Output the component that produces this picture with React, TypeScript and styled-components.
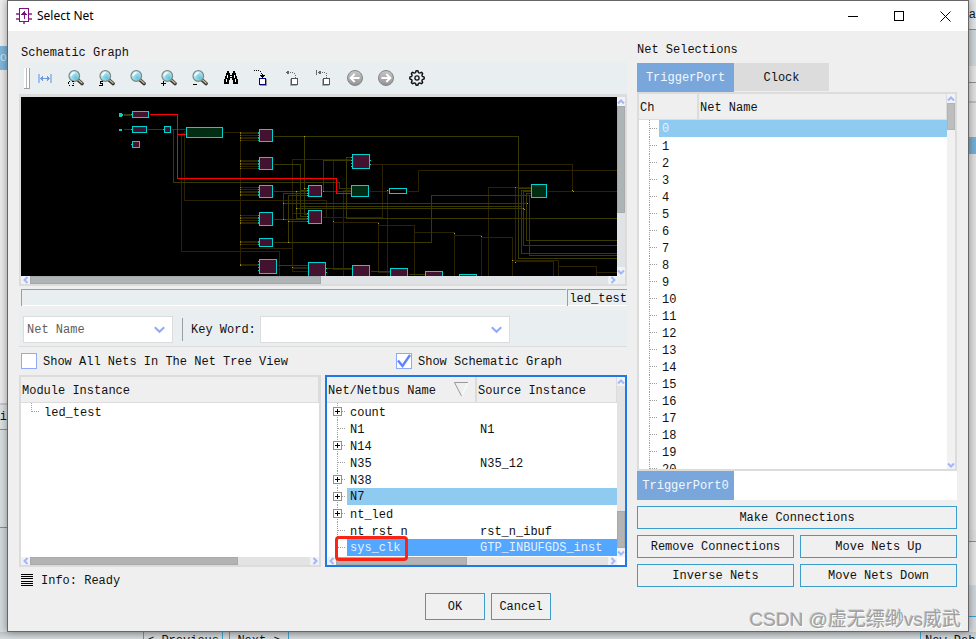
import React from "react";
import styled, { createGlobalStyle, css } from "styled-components";

const MONO = '"Liberation Mono", "Courier New", monospace';
const SANS = '"Noto Sans", "Open Sans", sans-serif';
const FACE = "#efefef";
const PALE = "#e9eef1";
const EDGE = "#dcdcdc";
const ARROW = "#a3b6fa";

const Global = createGlobalStyle`
  * { box-sizing: border-box; }
  body { margin: 0; font: 12px/17px ${MONO}; color: #111; background: #d3d9dc; }
  button, input, select { font: inherit; color: inherit; margin: 0; }
  svg { display: block; }
`;

/* ---------- desktop behind the dialog ---------- */

const Desktop = styled.div`
  position: relative;
  display: grid;
  grid-template-columns: 7px minmax(0, 1fr) 7px;
  grid-template-rows: 1fr 7px;
  min-height: 100vh;
  overflow: hidden;
`;

const Strip = styled.div`
  display: flex;
  flex-direction: column;
  overflow: hidden;
`;

const Slab = styled.div<{ $h: number; $bg: string; $line?: boolean; $ink?: string }>`
  flex: none;
  height: ${(p) => p.$h}px;
  background: ${(p) => p.$bg};
  color: ${(p) => p.$ink || "inherit"};
  border-bottom: ${(p) => (p.$line ? "1px solid #8c8c8c" : "0")};
  display: flex;
  align-items: center;
  justify-content: flex-end;
  white-space: nowrap;
  line-height: 20px;
`;

const RestSlab = styled.div`
  flex: 1;
  background: #d3d9dc;
`;

const Under = styled.div`
  grid-column: 1 / -1;
  display: grid;
  grid-template-columns: 80px 60px 1fr 56px;
  column-gap: 6px;
  padding-left: 143px;
  align-items: end;
  overflow: hidden;
  background: linear-gradient(#bfc3c6, #d5dadd);
`;

const UnderButton = styled.button`
  height: 18px;
  padding: 0;
  border: solid #3c9dcc;
  border-width: 0 1px;
  background: none;
  white-space: nowrap;
  overflow: hidden;
  line-height: 12px;
  &:last-child { grid-column: 4; border-right: 0; text-align: left; padding-left: 4px; }
`;

/* ---------- dialog frame ---------- */

const Dialog = styled.main`
  display: flex;
  flex-direction: column;
  background: ${FACE};
  border: 1px solid #666;
  box-shadow: 0 0 8px rgba(0, 0, 0, 0.4);
  z-index: 1;
`;

const TitleBar = styled.header`
  display: flex;
  align-items: center;
  height: 30px;
  padding-left: 8px;
  background: #fff;
`;

const Title = styled.h1`
  flex: 1;
  margin: 0 0 0 5px;
  font: 12px/18px ${SANS};
  color: #000;
`;

const WindowButton = styled.button`
  display: grid;
  place-items: center;
  width: 46px;
  height: 30px;
  padding: 0;
  border: 0;
  background: none;
`;

const Columns = styled.div`
  flex: 1;
  display: grid;
  grid-template-columns: minmax(0, 608fr) minmax(0, 320fr);
  column-gap: 10px;
  padding: 0 11px;
`;

const LeftColumn = styled.section`
  display: flex;
  flex-direction: column;
`;

const RightColumn = styled.section`
  display: flex;
  flex-direction: column;
  padding-bottom: 6px;
`;

const Caption = styled.h2<{ $lead?: boolean }>`
  height: ${(p) => (p.$lead ? 31 : 32)}px;
  margin: 0;
  padding: ${(p) => (p.$lead ? "14px 0 0 2px" : "11px 0 0")};
  font: 12px/17px ${MONO};
`;

const Footer = styled.footer`
  display: flex;
  justify-content: center;
  gap: 6px;
  padding-bottom: 11px;
`;

const PushButton = styled.button<{ $tall?: boolean }>`
  min-width: ${(p) => (p.$tall ? 60 : 0)}px;
  height: ${(p) => (p.$tall ? 27 : 23)}px;
  padding: 2px 0 0;
  border: 1px solid #3c9dcc;
  background: #f0f0f0;
`;

/* ---------- toolbar ---------- */

const ToolBar = styled.div`
  display: flex;
  align-items: center;
  gap: 15px;
  height: 32px;
  padding-left: 5px;
  background: ${PALE};
`;

const Grip = styled.div`
  width: 6px;
  height: 21px;
  margin-right: -8px;
  background: #fff;
  border: solid #a0a0a0;
  border-width: 0 1px 1px 0;
  box-shadow: inset -2px 0 0 #fff, inset -3px 0 0 #b8b8b8;
`;

const Tool = styled.button`
  width: 16px;
  height: 16px;
  padding: 0;
  border: 0;
  background: none;
`;

/* ---------- scroll bars ---------- */

type BarProps = { $vertical?: boolean; $parts: [number, number, number]; $track: string };

const Bar = styled.div<BarProps>`
  display: grid;
  ${(p) => {
    const t = `9px ${p.$parts[0]}fr ${p.$parts[1]}fr ${p.$parts[2]}fr 9px`;
    return p.$vertical
      ? css`grid-template-rows: ${t}; width: 8px;`
      : css`grid-template-columns: ${t}; height: 8px;`;
  }}
  background: ${(p) => p.$track};
`;

const BarArrow = styled.button`
  display: grid;
  place-items: center;
  min-width: 0;
  padding: 0;
  border: 0;
  background: #f0f2f6;
`;

const Thumb = styled.div<{ $c: string }>`
  background: ${(p) => p.$c};
  box-shadow: inset 0 0 0 1px rgba(0, 0, 0, 0.05);
`;

const ARROWS = { up: "M1 5.5L4 2.5L7 5.5", down: "M1 2.5L4 5.5L7 2.5", left: "M5.5 1L2.5 4L5.5 7", right: "M2.5 1L5.5 4L2.5 7" };

function ArrowGlyph({ dir }: { dir: keyof typeof ARROWS }) {
  return (
    <svg width="8" height="8" viewBox="0 0 8 8" fill="none" stroke={ARROW} strokeWidth="2">
      <path d={ARROWS[dir]} />
    </svg>
  );
}

function ScrollBar({ vertical, parts, track = "#e3e3e3", thumb = "#b3b3b3" }: {
  vertical?: boolean; parts: [number, number, number]; track?: string; thumb?: string;
}) {
  return (
    <Bar $vertical={vertical} $parts={parts} $track={track}>
      <BarArrow aria-label={vertical ? "Scroll up" : "Scroll left"}><ArrowGlyph dir={vertical ? "up" : "left"} /></BarArrow>
      <span />
      <Thumb $c={thumb} />
      <span />
      <BarArrow aria-label={vertical ? "Scroll down" : "Scroll right"}><ArrowGlyph dir={vertical ? "down" : "right"} /></BarArrow>
    </Bar>
  );
}

/* ---------- schematic ---------- */

const GraphFrame = styled.div`
  display: grid;
  grid-template-columns: minmax(0, 1fr) 8px;
  grid-template-rows: 179px 8px;
  border: 2px solid ${EDGE};
  border-top-width: 3px;
  background: ${PALE};
`;

const Canvas = styled.svg`
  width: 100%;
  height: 100%;
  background: #000;
`;

const StatusLine = styled.div`
  display: grid;
  grid-template-columns: minmax(0, 1fr) auto;
  gap: 1px;
  margin: 3px 0 5px 2px;
  background: ${PALE};
`;

const StatusCell = styled.div`
  height: 17px;
  padding-left: 1px;
  border: solid #9a9fa1;
  border-width: 1px 0 0 1px;
  box-shadow: inset 0 -1px 0 #fff;
  line-height: 18px;
`;

const modules: [number, number, number, number, string?][] = [
  [132, 111, 17, 7], [132, 126, 15, 7], [132, 141, 8, 7], [164, 126, 7, 7],
  [186, 127, 37, 11, "g"], [259, 129, 14, 13], [259, 157, 14, 13], [259, 185, 14, 13],
  [259, 212, 14, 14], [259, 238, 14, 9], [259, 259, 18, 15], [308, 185, 14, 12],
  [308, 210, 14, 14], [308, 262, 18, 18], [352, 154, 18, 15], [351, 185, 18, 12, "g"],
  [389, 188, 18, 6, "k"], [531, 184, 16, 14, "g"], [352, 265, 18, 15], [390, 268, 18, 15],
  [425, 271, 18, 15], [459, 274, 18, 15],
];

const brightWires =
  "M273 136H518V188H531M518 188V258H617M304 136V214H308M304 188H308M273 164H300V216H308M300 190H308" +
  "M273 191H308M296 191V218H308M296 208H523M273 219H308M283 219V193H308M283 203H527M273 242H431V195H531" +
  "M288 242V195H308M288 221H308M300 206H521M531 190H521V253H617M531 191H523V245H617M531 193H526V240H617" +
  "M531 195H529V255H617M123 129H132M147 129H164M171 129H186M173 129V182H339V188H351M123 114H132M123 115H132" +
  "M322 191H351M323 191V160H352M352 157H346V218H617M277 265H308M326 268H352M370 271H390M408 274H425";

const dimWires =
  "M186 133H181V251H279V276M186 131H184V200H326V217M322 217H382V164M370 164H572V190M223 132H240V265H259" +
  "M352 159H292V271H308M292 213H308M240 248H292M292 267H308M292 268H308M333 159V269H352M333 222H378V272H390" +
  "M378 225H414V276M414 232H454V276M454 235H481V276M481 237H512V276M351 190H343V276M389 190H387V276" +
  "M369 191H389M407 191H418V170H617M531 187H488V276M515 187V261H553V276M512 260H558V266H596V272H617" +
  "M558 266V276M596 272V276M547 191H617M277 269H279";

const combs = [132, 133, 135, 137, 138, 140, 160, 161, 163, 164, 166, 168, 187, 189, 191, 192, 194, 195, 215, 217, 218, 220, 222, 223, 241, 242, 244, 264];
const junctions: [number, number][] = [
  [304, 136], [296, 191], [296, 208], [283, 203], [283, 219], [288, 221], [288, 242], [323, 191],
  [527, 203], [523, 208], [524, 209], [572, 190], [573, 191], [515, 187], [378, 223], [454, 233],
  [481, 236], [512, 260], [515, 262], [333, 221], [292, 267], [304, 188], [387, 190], [240, 265],
];

function Schematic() {
  const fill = (k?: string) => (k === "g" ? "#032d13" : k === "k" ? "#000" : "#43122f");
  return (
    <Canvas viewBox="21 97 596 179" preserveAspectRatio="xMinYMin slice" shapeRendering="crispEdges" role="img" aria-label="Schematic of led_test">
      <g transform="translate(.5 .5)" fill="none">
        <path d={dimWires} stroke="#2c2200" />
        <path d={combs.map((y) => `M240 ${y}H259`).join("")} stroke="#2c2200" />
        <path d={brightWires} stroke="#3a3a00" />
        <path d="M149 114H177V178H336V193H351M177 134H186" stroke="#f00" />
      </g>
      {combs.map((y) => (
        <React.Fragment key={y}>
          <rect x="240" y={y} width="1" height="1" fill="#8a7a00" />
          <rect x="258" y={y} width="1" height="1" fill="#00b8a8" />
        </React.Fragment>
      ))}
      {junctions.map(([x, y]) => <rect key={`${x},${y}`} x={x} y={y} width="1" height="1" fill="#b0a800" />)}
      {modules.map(([x, y, w, h, k]) => (
        <rect key={`${x},${y}`} x={x + 0.5} y={y + 0.5} width={w - 1} height={h - 1} fill={fill(k)} stroke="#00d2d2" />
      ))}
      <path d="M119 113h3v1h1v2h-1v1h-3zM119 129h3v2h-3zM131 114h1v1h-1zM131 129h1v1h-1zM131 144h1v1h-1zM163 129h1v1h-1zM307 188h1v1h-1zM307 190h1v1h-1zM307 193h1v1h-1zM307 195h1v1h-1zM307 213h1v1h-1zM307 216h1v1h-1zM307 218h1v1h-1zM307 221h1v1h-1zM351 157h1v1h-1zM351 160h1v1h-1zM351 163h1v1h-1zM351 166h1v1h-1zM258 261h1v1h-1zM258 267h1v1h-1zM258 270h1v1h-1zM370 160h1v1h-1zM370 164h1v1h-1zM326 268h1v1h-1zM326 272h1v1h-1z" fill="#00d2c0" />
    </Canvas>
  );
}

/* ---------- filter and options ---------- */

const FilterBar = styled.div`
  display: flex;
  align-items: center;
  height: 36px;
  padding: 2px 4px 0;
  background: ${PALE};
  border-bottom: 1px solid ${EDGE};
`;

const Divider = styled.div`
  width: 1px;
  height: 23px;
  margin: 0 8px 0 9px;
  background: #9a9fa1;
`;

const ComboBox = styled.div<{ $w: number }>`
  display: grid;
  align-items: center;
  width: ${(p) => p.$w}px;
  & > * { grid-area: 1 / 1; }
  & > svg { justify-self: end; margin-right: 8px; pointer-events: none; }
`;

const Select = styled.select`
  width: 100%;
  height: 27px;
  padding: 2px 3px 0;
  appearance: none;
  border: 1px solid ${EDGE};
  border-radius: 0;
  background: #fff;
  color: #606060;
`;

const KeyLabel = styled.label`
  width: 69px;
  padding-top: 2px;
`;

const Chevron = () => (
  <svg width="11" height="8" viewBox="0 0 11 8" fill="none" stroke="#91a9f9" strokeWidth="2">
    <path d="M.8 1.2L5.5 5.8L10.2 1.2" />
  </svg>
);

const Options = styled.div`
  display: grid;
  grid-template-columns: 375fr 231fr;
  align-items: center;
  height: 28px;
  padding-left: 2px;
`;

const Option = styled.label`
  display: flex;
  align-items: center;
  gap: 6px;
  white-space: nowrap;
  line-height: 20px;
`;

const OptionText = styled.span`
  padding-top: 2px;
`;

const Check = styled.input`
  appearance: none;
  width: 16px;
  height: 16px;
  border: 1px solid #8ea8fa;
  background: #fff;
`;

const CheckBox = styled.span`
  display: grid;
  & > * { grid-area: 1 / 1; }
  & > svg { pointer-events: none; }
`;

/* ---------- trees ---------- */

const Panels = styled.div`
  flex: 1;
  display: grid;
  grid-template-columns: 1fr 1fr;
  gap: 4px;
`;

const Panel = styled.div<{ $active?: boolean }>`
  position: relative;
  display: grid;
  grid-template-columns: minmax(0, 1fr) auto;
  grid-template-rows: minmax(180px, 1fr) auto;
  border: 2px solid ${(p) => (p.$active ? "#1e78e6" : EDGE)};
  background: #fff;
`;

const NetPanel = styled(Panel)`
  flex: 1;
  grid-template-rows: minmax(0, 1fr);
`;

const Clip = styled.div`
  overflow: hidden;
  height: 0;
  min-height: 100%;
`;

const Table = styled.table`
  align-self: start;
  width: 100%;
  table-layout: fixed;
  border-collapse: separate;
  border-spacing: 0;
  td { padding: 0; height: 17px; }
`;

const Head = styled.th<{ $w?: number }>`
  width: ${(p) => (p.$w ? `${p.$w}px` : "auto")};
  height: 26px;
  padding: 3px 0 0 1px;
  background: ${FACE};
  border: solid ${EDGE};
  border-width: 0 ${(p) => (p.$w ? 2 : 1)}px 1px 0;
  font-weight: normal;
  text-align: left;
  line-height: 18px;
`;

const HeadLine = styled.div`
  display: flex;
  justify-content: space-between;
  padding-right: 6px;
`;

type Tone = "none" | "light" | "strong";
const toneBg = { none: "transparent", light: "#8fcaf0", strong: "#54a7ff" };

const Node = styled.div`
  display: grid;
  grid-template-columns: 20px minmax(0, 1fr);
  height: 17px;
`;

const NodeText = styled.span<{ $tone: Tone; $pale?: boolean }>`
  display: block;
  height: 17px;
  padding-left: 3px;
  line-height: ${(p) => (p.$tone === "none" ? 20 : 18)}px;
  white-space: nowrap;
  background: ${(p) => toneBg[p.$tone]};
  color: ${(p) => (p.$pale ? "#e4f1ff" : "inherit")};
`;

function Branch({ plus, last }: { plus?: boolean; last?: boolean }) {
  return (
    <svg width="20" height="17" viewBox="0 0 20 17" shapeRendering="crispEdges" fill="none">
      <path d={`M10.5 0V${last ? 9 : 17}M11 8.5H19`} stroke="#a0a0a0" strokeDasharray="1 1" />
      {plus && (
        <>
          <rect x="6.5" y="4.5" width="8" height="8" fill="#fff" stroke="#909090" />
          <path d="M8 8.5H13M10.5 6V11" stroke="#000" />
        </>
      )}
    </svg>
  );
}

function TreeCell({ text, plus, last, tone = "none", pale }: { text: string; plus?: boolean; last?: boolean; tone?: Tone; pale?: boolean }) {
  return (
    <Node>
      <Branch plus={plus} last={last} />
      <NodeText $tone={tone} $pale={pale}>{text}</NodeText>
    </Node>
  );
}

const Marker = styled.div`
  position: absolute;
  left: 8px;
  bottom: 4px;
  width: 73px;
  height: 25px;
  border: 3px solid #fb2414;
  border-radius: 4px;
  pointer-events: none;
`;

const Info = styled.div`
  display: flex;
  align-items: center;
  gap: 8px;
  height: 26px;
  padding-left: 2px;
  line-height: 20px;
`;

const InfoText = styled.span`
  padding-top: 2px;
`;

const nets: { name: string; source?: string; plus?: boolean; tone?: Tone }[] = [
  { name: "count", plus: true },
  { name: "N1", source: "N1" },
  { name: "N14", plus: true },
  { name: "N35", source: "N35_12" },
  { name: "N38", plus: true },
  { name: "N7", plus: true, tone: "light" },
  { name: "nt_led", plus: true },
  { name: "nt_rst_n", source: "rst_n_ibuf" },
  { name: "sys_clk", source: "GTP_INBUFGDS_inst", tone: "strong" },
];

/* ---------- right column ---------- */

const Tabs = styled.div<{ $bg?: string }>`
  display: flex;
  align-items: flex-start;
  height: 29px;
  background: ${(p) => p.$bg || "none"};
`;

const Tab = styled.button<{ $on?: boolean }>`
  width: ${(p) => (p.$on ? 97 : 95)}px;
  height: ${(p) => (p.$on ? 29 : 28)}px;
  padding: 2px 0 0;
  border: 0;
  background: ${(p) => (p.$on ? "#79a7dc" : EDGE)};
  color: ${(p) => (p.$on ? "#f2f7ff" : "#111")};
`;

const Actions = styled.div`
  display: grid;
  grid-template-columns: 1fr 1fr;
  gap: 6px;
  margin-top: 6px;
  & > :first-child { grid-column: 1 / -1; }
`;

const Watermark = styled.div`
  position: absolute;
  right: 15px;
  bottom: 6px;
  z-index: 2;
  font: 19px/26px "Liberation Sans", "Noto Sans CJK SC", sans-serif;
  color: #a0a0a0;
  text-shadow: 1px 1px 0 #fff, -1px -1px 0 rgba(110, 110, 110, 0.35);
  white-space: nowrap;
  pointer-events: none;
`;

/* ---------- icons ---------- */

function Icon({ children, crisp }: { children: React.ReactNode; crisp?: boolean }) {
  return (
    <svg width="16" height="16" viewBox="0 0 16 16" fill="none" shapeRendering={crisp ? "crispEdges" : "auto"}>
      {children}
    </svg>
  );
}

function Lens({ mark }: { mark?: string }) {
  return (
    <Icon>
      <path d="M9.5 9.5L14 13.5" stroke="#333" strokeWidth="3.6" strokeLinecap="round" />
      <path d="M10 9.5L14 13" stroke="#c4b890" strokeWidth="1.5" strokeLinecap="round" />
      <circle cx="6.3" cy="6" r="5.3" fill="url(#lens)" stroke="#7b8788" strokeWidth="1.2" />
      <path d="M3.4 6A3.2 3.2 0 0 1 6.6 2.8" stroke="#fff" strokeWidth="1.4" />
      {mark && <path d={mark} stroke="#000" shapeRendering="crispEdges" />}
    </Icon>
  );
}

function RoundArrow({ flip }: { flip?: boolean }) {
  return (
    <Icon>
      <circle cx="8" cy="8" r="7.5" fill="url(#disc)" stroke="#858585" />
      <path d={flip ? "M3.5 8H12M8.3 4L12.3 8L8.3 12" : "M12.5 8H4M7.7 4L3.7 8L7.7 12"} stroke="#fff" strokeWidth="2" />
    </Icon>
  );
}

const gearPath = Array.from({ length: 48 }, (_, i) => {
  const a = (i / 48) * Math.PI * 2;
  const r = 6.4 + 0.9 * Math.max(-1, Math.min(1, 1.6 * Math.cos(8 * a)));
  return `${i ? "L" : "M"}${(8 + r * Math.cos(a)).toFixed(2)} ${(8 + r * Math.sin(a)).toFixed(2)}`;
}).join("") + "Z";

const tools: [string, React.ReactNode][] = [
  ["Fit width", <Icon crisp><path d="M1 4H3V13H1zM13 4H15V13H13z" fill="#a5bdec" /><path d="M3 8H4V7H5V6H6V8H10V6H11V7H12V8H13V9H12V10H11V11H10V9H6V11H5V10H4V9H3z" fill="#6f9be0" /></Icon>],
  ["Zoom area", <Lens mark="M.5 12V13.5M.5 15.5H2M.5 11.5H2M4 11.5H5.5M5 13V14M3.5 15.5H5.5" />],
  ["Zoom selection", <Lens mark="M4 11.5H1M1.5 12V13M1 13.5H4M3.5 14V15M4 15.5H0" />],
  ["Zoom fit", <Lens />],
  ["Zoom in", <Lens mark="M0 13.5H5M2.5 11V16" />],
  ["Zoom out", <Lens mark="M1 14.5H5" />],
  ["Find", <Icon crisp><path d="M4 1H6V3H7V5H9V3H10V1H12V3H13V6H14V9H15V14H10V10H9V8H7V10H6V14H1V9H2V6H3V3H4z" fill="#000" /><path d="M4 5H5V8H4zM3 9H4V12H3zM11 5H12V8H11zM12 9H13V12H12zM7 6H9V7H7z" fill="#fff" /></Icon>],
  ["Descend", <Icon crisp><path d="M0 .5H1M2 .5H3M4 .5H5M6 1.5H7M7 3.5H8M8 4.5H9" stroke="#000" /><path d="M6 5H11V6H10V7H9V8H8V7H7V6H6z" fill="#000" /><path d="M6 9H13V16H6z" fill="#999" /><rect x="5.5" y="8.5" width="6" height="6" fill="#fff" stroke="#000080" /></Icon>],
  ["Ascend", <Icon crisp><path d="M1 2.5H2M2 1.5H4M2 3.5H4M2 2.5H4M5 2.5H6M7 2.5H8M9 3.5H10M10 5.5H11M10 7.5H11" stroke="#666" /><path d="M5 9H12V16H5z" fill="#aaa" /><rect x="6.5" y="8.5" width="6" height="6" fill="#fff" stroke="#555" /></Icon>],
  ["Ascend to top", <Icon crisp><path d="M.5 0V5M2 2.5H5M3 1.5H5M3 3.5H5M6 2.5H7M8 2.5H9M10 3.5H11M10 5.5H11M10 7.5H11" stroke="#666" /><path d="M6 9H13V16H6z" fill="#aaa" /><rect x="7.5" y="8.5" width="6" height="6" fill="#fff" stroke="#555" /></Icon>],
  ["Back", <RoundArrow />],
  ["Forward", <RoundArrow flip />],
  ["Settings", <Icon><path d={gearPath} stroke="#111" strokeWidth="1.4" /><circle cx="8" cy="8" r="2.1" stroke="#111" strokeWidth="1.3" /></Icon>],
];

const Defs = () => (
  <svg width="0" height="0" aria-hidden="true">
    <defs>
      <radialGradient id="lens" cx=".65" cy=".7" r=".75">
        <stop offset="0" stopColor="#5fc3dc" />
        <stop offset=".6" stopColor="#a5dfea" />
        <stop offset="1" stopColor="#e9fafd" />
      </radialGradient>
      <linearGradient id="disc" x1="0" y1="0" x2="0" y2="1">
        <stop offset="0" stopColor="#c8c8c8" />
        <stop offset="1" stopColor="#929292" />
      </linearGradient>
    </defs>
  </svg>
);

export default function App() {
  return (
    <>
      <Global />
      <Desktop>
        <Strip>
          <Slab $h={46} $bg="#ededed" />
          <Slab $h={24} $bg="#7fb5da" $ink="#cfe4f2">Co</Slab>
          <Slab $h={333} $bg="#ebebeb" />
          <Slab $h={2} $bg="#c4c6c8" />
          <Slab $h={25} $bg="#dde1e3" $line>ti</Slab>
          <Slab $h={98} $bg="#d9dfe1" $line />
          <RestSlab />
        </Strip>

        <Dialog role="dialog" aria-labelledby="dialog-title">
          <TitleBar>
            <svg width="16" height="16" viewBox="0 0 16 16" fill="none" shapeRendering="crispEdges">
              <path d="M0 5.5H3M0 10.5H3M13 5.5H16M13 10.5H16M8 14V16" stroke="#a65aa6" strokeWidth="2" />
              <rect x="3.5" y=".5" width="9" height="13" fill="#fff" stroke="#80107f" strokeWidth="1" />
              <path d="M8 3V11M5 6.5H11M6 5.5H10M7 4.5H9" stroke="#80107f" />
            </svg>
            <Title id="dialog-title">Select Net</Title>
            <WindowButton aria-label="Minimize"><svg width="10" height="10" stroke="#000" shapeRendering="crispEdges"><path d="M0 5.5H10" /></svg></WindowButton>
            <WindowButton aria-label="Maximize"><svg width="10" height="10" stroke="#000" fill="none" shapeRendering="crispEdges"><rect x=".5" y=".5" width="9" height="9" /></svg></WindowButton>
            <WindowButton aria-label="Close"><svg width="11" height="11" stroke="#000"><path d="M.5 .5L10.5 10.5M10.5 .5L.5 10.5" /></svg></WindowButton>
          </TitleBar>

          <Columns>
            <LeftColumn>
              <Caption $lead>Schematic Graph</Caption>
              <ToolBar role="toolbar" aria-label="Schematic tools">
                <Grip />
                {tools.map(([label, icon]) => <Tool key={label} aria-label={label}>{icon}</Tool>)}
              </ToolBar>
              <GraphFrame>
                <Schematic />
                <ScrollBar vertical parts={[0, 107, 54]} track="#dfe3e5" thumb="#aeb3b5" />
                <ScrollBar parts={[0, 291, 287]} track="#dfe3e5" thumb="#aeb3b5" />
              </GraphFrame>
              <StatusLine>
                <StatusCell />
                <StatusCell>led_test</StatusCell>
              </StatusLine>
              <FilterBar>
                <ComboBox $w={150}>
                  <Select aria-label="Search field"><option>Net Name</option></Select>
                  <Chevron />
                </ComboBox>
                <Divider />
                <KeyLabel htmlFor="key-word">Key Word:</KeyLabel>
                <ComboBox $w={250}>
                  <Select id="key-word"><option></option></Select>
                  <Chevron />
                </ComboBox>
              </FilterBar>
              <Options>
                <Option>
                  <CheckBox><Check type="checkbox" /></CheckBox>
                  <OptionText>Show All Nets In The Net Tree View</OptionText>
                </Option>
                <Option>
                  <CheckBox>
                    <Check type="checkbox" defaultChecked />
                    <svg width="16" height="16" viewBox="0 0 16 16" fill="none" stroke="#5f86f8" strokeWidth="2.4"><path d="M2 7.5L6.5 13L14 2" /></svg>
                  </CheckBox>
                  <OptionText>Show Schematic Graph</OptionText>
                </Option>
              </Options>
              <Panels>
                <Panel>
                  <Table>
                    <thead><tr><Head>Module Instance</Head></tr></thead>
                    <tbody><tr><td><TreeCell text="led_test" last /></td></tr></tbody>
                  </Table>
                  <span />
                  <ScrollBar parts={[0, 208, 72]} />
                </Panel>
                <Panel $active>
                  <Table>
                    <thead>
                      <tr>
                        <Head $w={150}>
                          <HeadLine>
                            Net/Netbus Name
                            <svg width="15" height="15" viewBox="0 0 15 15" fill="none"><path d="M14 .5L7.5 14" stroke="#fff" /><path d="M7.5 14L.5 .5H14" stroke="#999" /></svg>
                          </HeadLine>
                        </Head>
                        <Head>Source Instance</Head>
                      </tr>
                    </thead>
                    <tbody>
                      {nets.map((n, i) => (
                        <tr key={n.name}>
                          <td><TreeCell text={n.name} plus={n.plus} tone={n.tone} pale={n.tone === "strong"} last={i === nets.length - 1} /></td>
                          <td><NodeText $tone={n.tone || "none"} $pale={n.tone === "strong"}>{n.source}</NodeText></td>
                        </tr>
                      ))}
                    </tbody>
                  </Table>
                  <ScrollBar vertical parts={[125, 37, 0]} />
                  <ScrollBar parts={[0, 131, 141]} />
                  <Marker />
                </Panel>
              </Panels>
              <Info>
                <svg width="12" height="12" viewBox="0 0 12 12" stroke="#000" shapeRendering="crispEdges"><path d="M0 .5H12M0 2.5H12M0 4.5H12M0 7.5H12M0 9.5H12M0 11.5H12" /></svg>
                <InfoText>Info: Ready</InfoText>
              </Info>
            </LeftColumn>

            <RightColumn>
              <Caption>Net Selections</Caption>
              <Tabs role="tablist">
                <Tab role="tab" aria-selected="true" $on>TriggerPort</Tab>
                <Tab role="tab" aria-selected="false">Clock</Tab>
              </Tabs>
              <NetPanel>
                <Clip>
                  <Table>
                    <thead><tr><Head $w={60}>Ch</Head><Head>Net Name</Head></tr></thead>
                    <tbody>
                      {Array.from({ length: 21 }, (_, i) => (
                        <tr key={i}>
                          <td><TreeCell text={String(i)} tone={i ? "none" : "light"} pale={!i} /></td>
                          <td><NodeText $tone={i ? "none" : "light"} /></td>
                        </tr>
                      ))}
                    </tbody>
                  </Table>
                </Clip>
                <ScrollBar vertical parts={[0, 27, 330]} track="#f1f1f1" thumb="#bdbdbd" />
              </NetPanel>
              <Tabs role="tablist" $bg="#fff">
                <Tab role="tab" aria-selected="true" $on>TriggerPort0</Tab>
              </Tabs>
              <Actions>
                <PushButton>Make Connections</PushButton>
                <PushButton>Remove Connections</PushButton>
                <PushButton>Move Nets Up</PushButton>
                <PushButton>Inverse Nets</PushButton>
                <PushButton>Move Nets Down</PushButton>
              </Actions>
            </RightColumn>
          </Columns>

          <Footer>
            <PushButton $tall>OK</PushButton>
            <PushButton $tall>Cancel</PushButton>
          </Footer>
          <Defs />
        </Dialog>

        <Strip>
          <Slab $h={30} $bg="#e3e6e8" $line>a</Slab>
          <Slab $h={36} $bg="#cfd5d9" />
          <Slab $h={17} $bg="#e4e4e4" $line />
          <Slab $h={18} $bg="#e0e0e0" />
          <Slab $h={2} $bg="#bdbdbd" />
          <Slab $h={34} $bg="#dedede" />
          <Slab $h={17} $bg="#78aed2" />
          <Slab $h={376} $bg="#e0e0e0" />
          <Slab $h={12} $bg="#dcdcdc" $line />
          <Slab $h={43} $bg="#e4e4e4" />
          <Slab $h={31} $bg="#cfd4d8" />
          <Slab $h={1} $bg="#3c9dcc" />
          <RestSlab />
        </Strip>

        <Under>
          <UnderButton>&lt; Previous</UnderButton>
          <UnderButton>Ne<u>x</u>t &gt;</UnderButton>
          <UnderButton>New Debug</UnderButton>
        </Under>
        <Watermark>CSDN @虚无缥缈vs威武</Watermark>
      </Desktop>
    </>
  );
}
